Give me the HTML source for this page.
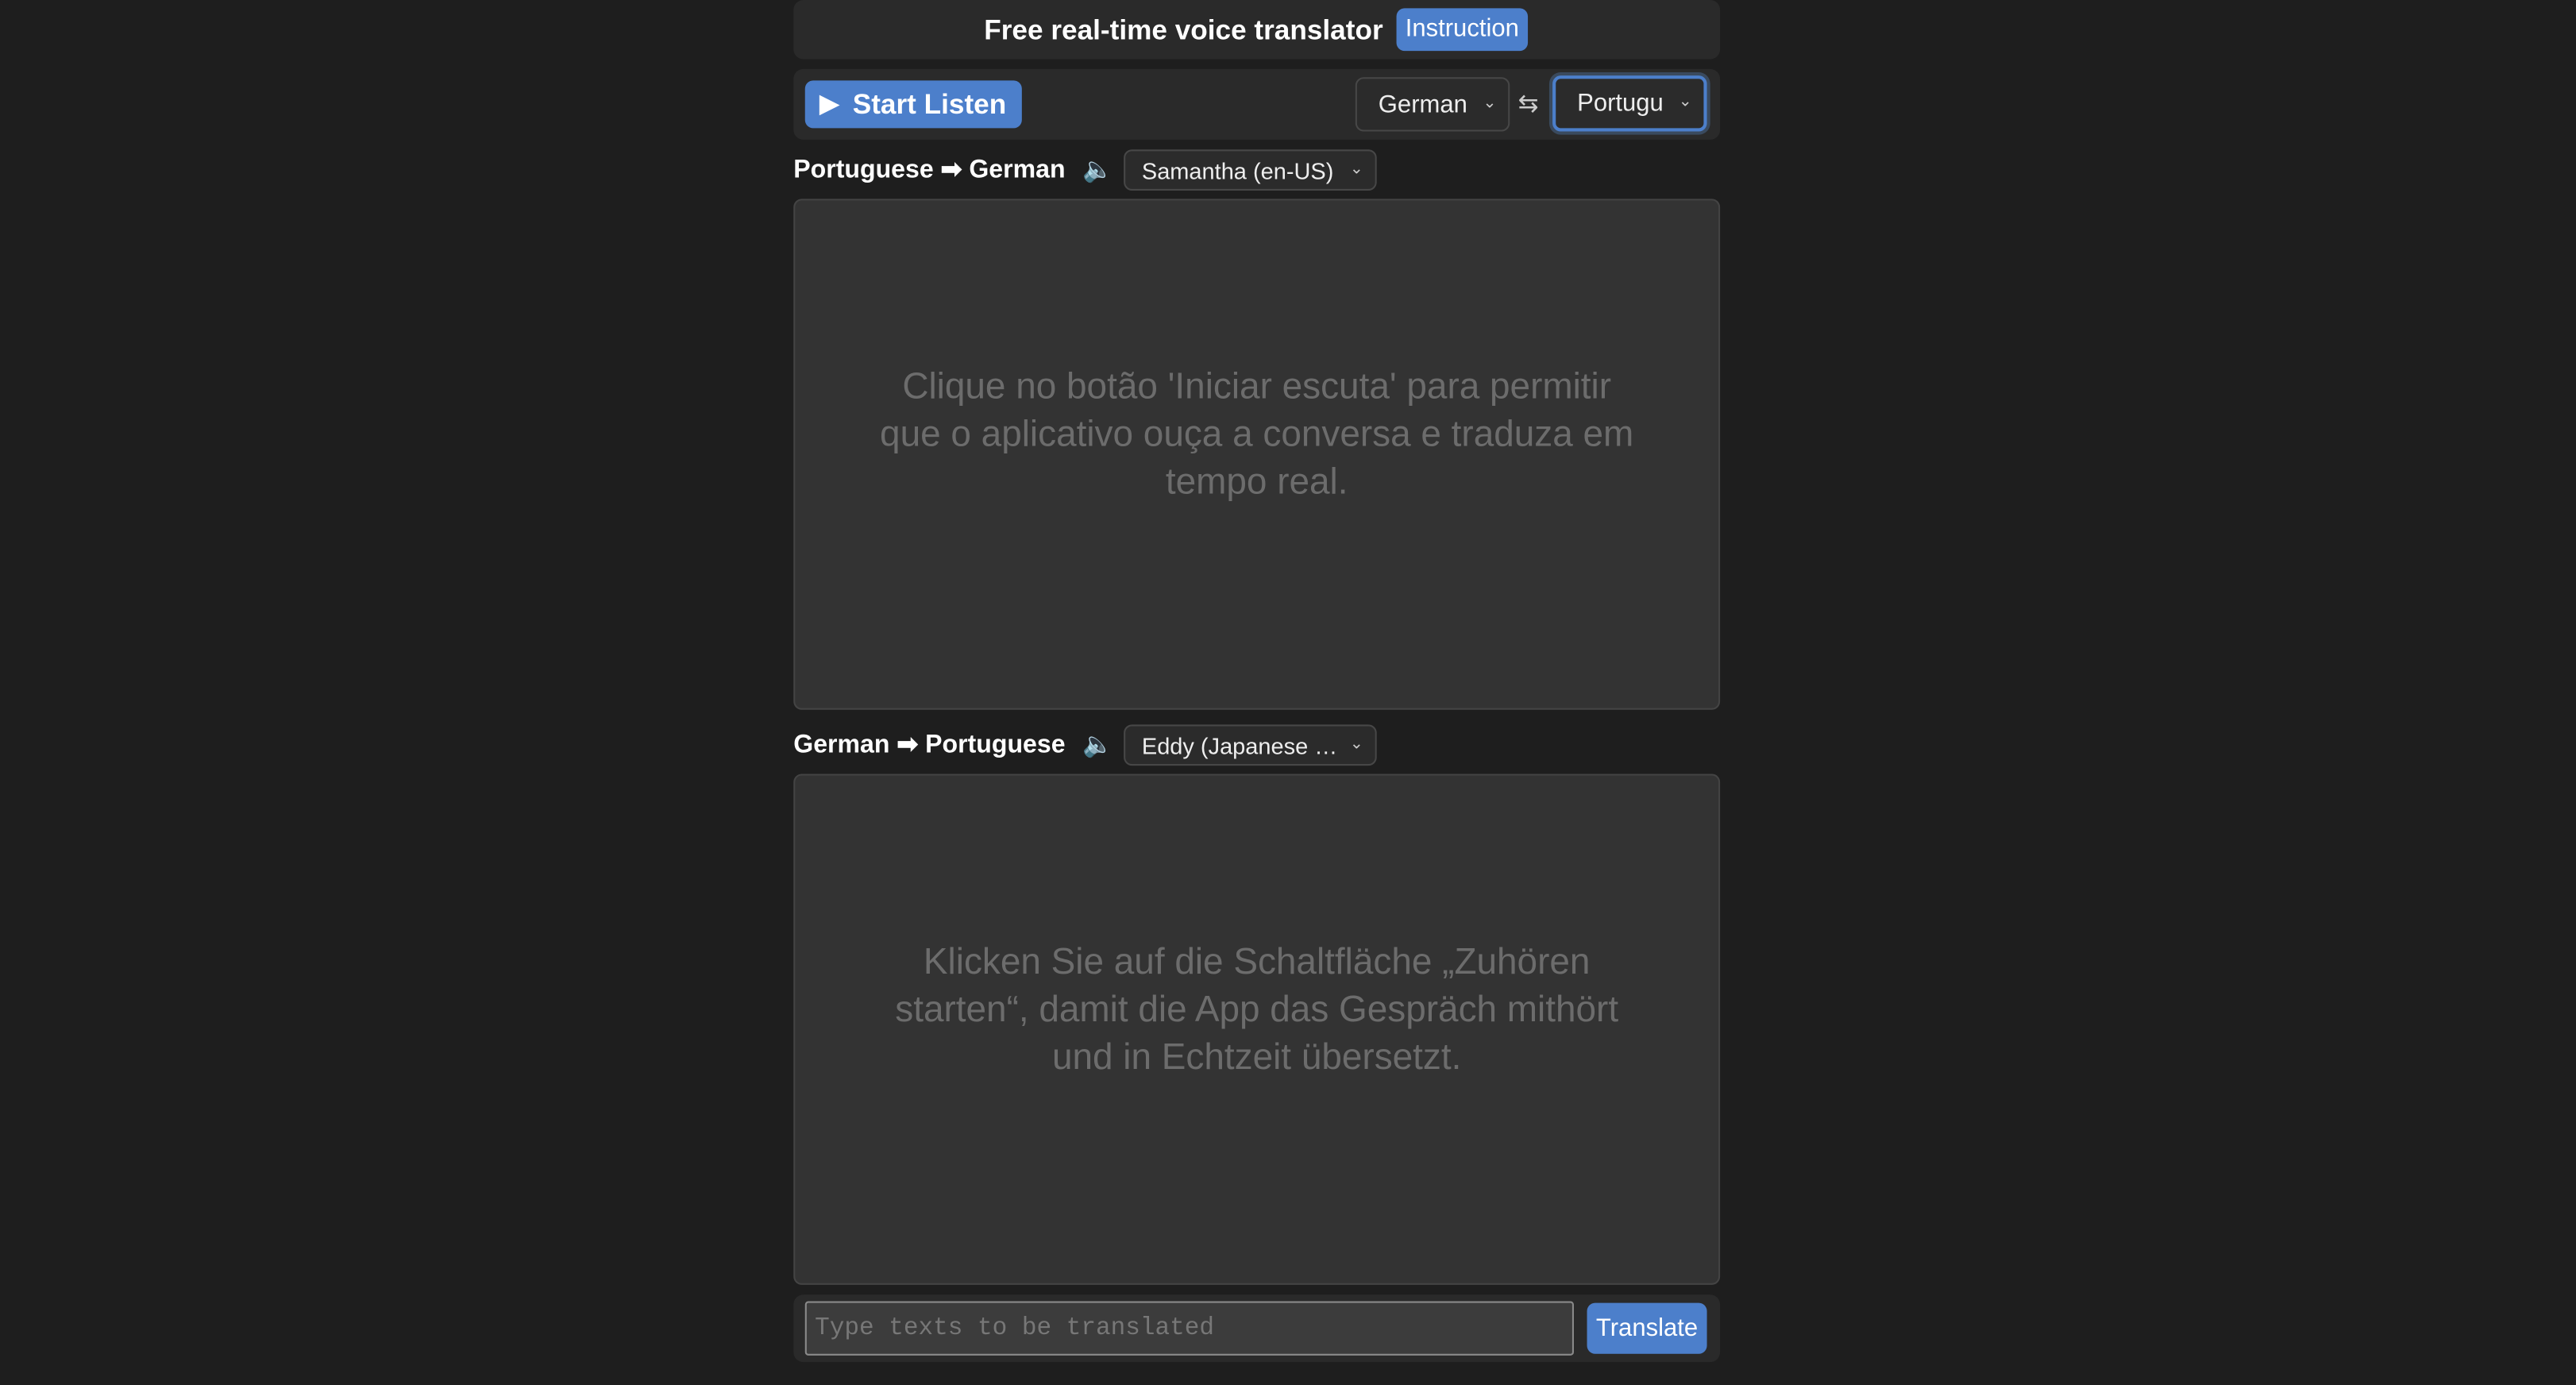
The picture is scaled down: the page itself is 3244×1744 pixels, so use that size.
<!DOCTYPE html>
<html><head><meta charset="utf-8"><style>
html,body{margin:0;padding:0;background:#1e1e1e;width:3244px;height:1743px;overflow:hidden}
#s{position:absolute;left:0;top:0;width:1568px;height:843px;transform:scale(2.06888);transform-origin:0 0;font-family:"Liberation Sans",Arial,sans-serif;color:#fff}
.a{position:absolute}
.box{background:#2a2a2a;border-radius:6px}
.sel{position:absolute;background:#2b2b2b;border:1px solid #474747;border-radius:5px;box-sizing:border-box;color:#eee;font-size:15px;line-height:1}
.sel .t{position:absolute;left:13px;top:50%;transform:translateY(-50%)}
.sel .c{position:absolute;right:7px;top:50%;transform:translateY(-55%);font-size:10px;color:#ccc}
.ta{position:absolute;left:483px;width:564px;height:311px;background:#333;border:1px solid #444;border-radius:5px;box-sizing:border-box}
.ta div{position:absolute;left:48px;right:48px;top:calc(50% - 13px);transform:translateY(-50%);text-align:center;color:#6c6c6c;font-size:22.2px;line-height:29px}
.lbl{position:absolute;left:483px;font-weight:bold;font-size:15.5px}
.spk{position:absolute;left:659px;font-size:15px;color:#aaa}
</style></head><body><div id="s">
<div class="a box" style="left:483px;top:0;width:564px;height:36px"></div>
<div class="a" style="left:599px;top:9px;font-weight:bold;font-size:17px">Free real-time voice translator</div>
<div class="a" style="left:850px;top:5px;width:80px;height:26px;background:#4c7fcb;border-radius:5px;font-size:15px;text-align:center;line-height:26px">Instruction</div>

<div class="a box" style="left:483px;top:42px;width:564px;height:43px"></div>
<div class="a" style="left:490px;top:49px;width:132px;height:29px;background:#4c7fcb;border-radius:5px;font-weight:bold;font-size:17px;line-height:29px"><span style="position:absolute;left:9px;top:0;font-size:15px">&#9654;</span><span style="position:absolute;left:29px">Start Listen</span></div>
<div class="sel" style="left:825px;top:47px;width:94px;height:33px"><span class="t">German</span><span class="c">&#8964;</span></div>
<div class="a" style="left:924px;top:54px;font-size:15px;color:#ccc">&#8646;</div>
<div class="sel" style="left:945px;top:46px;width:94px;height:34px;border:2px solid #4c7fcb;box-shadow:0 0 0 2px #3a4a5e"><span class="t">Portugu</span><span class="c">&#8964;</span></div>

<div class="lbl" style="top:94px">Portuguese &#10145; German</div>
<div class="spk" style="top:94px">&#128264;</div>
<div class="sel" style="left:684px;top:91px;width:154px;height:25px;font-size:14px"><span class="t" style="left:10px">Samantha (en-US)</span><span class="c">&#8964;</span></div>
<div class="ta" style="top:121px"><div>Clique no botão 'Iniciar escuta' para permitir que o aplicativo ouça a conversa e traduza em tempo real.</div></div>

<div class="lbl" style="top:444px">German &#10145; Portuguese</div>
<div class="spk" style="top:444px">&#128264;</div>
<div class="sel" style="left:684px;top:441px;width:154px;height:25px;font-size:14px"><span class="t" style="left:10px">Eddy (Japanese …</span><span class="c">&#8964;</span></div>
<div class="ta" style="top:471px"><div>Klicken Sie auf die Schaltfläche „Zuhören starten“, damit die App das Gespräch mithört und in Echtzeit übersetzt.</div></div>

<div class="a box" style="left:483px;top:788px;width:564px;height:41px"></div>
<div class="a" style="left:490px;top:792px;width:468px;height:33px;background:#3c3c3c;border:1px solid #8a8a8a;border-radius:2px;box-sizing:border-box;font-family:'Liberation Mono',monospace;font-size:15px;color:#777;line-height:31px;padding-left:5px">Type texts to be translated</div>
<div class="a" style="left:966px;top:793px;width:73px;height:31px;background:#4c7fcb;border-radius:5px;font-size:15px;text-align:center;line-height:31px">Translate</div>
</div></body></html>
